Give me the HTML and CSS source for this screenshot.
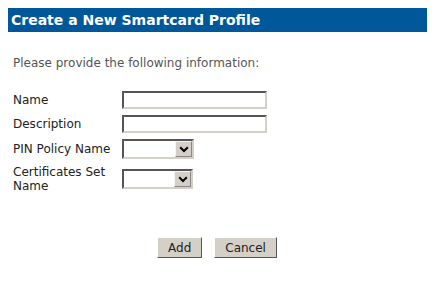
FILE: index.html
```html
<!DOCTYPE html>
<html lang="en">
<head>
  <meta charset="UTF-8" />
  <title>Create a New Smartcard Profile</title>
  <link rel="stylesheet" href="styles.css">
</head>
<body>

  <h1 class="title-bar">Create a New Smartcard Profile</h1>

  <div class="content">
    <p class="intro">Please provide the following information:</p>

    <form id="profileForm" class="profile-form">
      <label for="name">Name</label>
      <input type="text" id="name" class="text-field" />

      <label for="description">Description</label>
      <input type="text" id="description" class="text-field" />

      <label for="pinPolicy">PIN Policy Name</label>
      <div class="select-box wide">
        <span class="select-value"></span>
        <span class="select-arrow">
          <svg width="10" height="7" viewBox="0 0 10 7"><path d="M1.2 1.2 L5 5 L8.8 1.2" fill="none" stroke="#000" stroke-width="2"/></svg>
        </span>
      </div>

      <label for="certSet">Certificates Set Name</label>
      <div class="select-box">
        <span class="select-value"></span>
        <span class="select-arrow">
          <svg width="10" height="7" viewBox="0 0 10 7"><path d="M1.2 1.2 L5 5 L8.8 1.2" fill="none" stroke="#000" stroke-width="2"/></svg>
        </span>
      </div>
    </form>

    <div class="actions">
      <button type="button" class="btn">Add</button>
      <button type="button" class="btn btn-cancel">Cancel</button>
    </div>
  </div>

</body>
</html>
```

FILE: styles.css
```css
body {
  margin: 8px;
  font-family: 'DejaVu Sans', Verdana, sans-serif;
  font-size: 12px;
  color: #222;
  background: #fff;
}
.title-bar {
  margin: 0;
  height: 24px;
  line-height: 24px;
  padding-left: 3px;
  background: #00579a;
  color: #fff;
  font-size: 14px;
  font-weight: bold;
}
.content {
  padding-left: 5px;
}
.intro {
  margin: 23px 0 0;
  color: #555;
  line-height: 16px;
}
.profile-form {
  display: grid;
  grid-template-columns: 109px auto;
  justify-items: start;
  align-items: center;
  row-gap: 6px;
  margin-top: 20px;
}
.profile-form label {
  line-height: 14px;
  width: 100px;
}
.text-field {
  width: 141px;
  height: 14px;
  padding: 0;
  margin: 0;
  border: 2px solid;
  border-color: #555 #d4d0c8 #d4d0c8 #555;
  background: #fff;
  font: inherit;
}
.select-box {
  display: flex;
  width: 67px;
  height: 16px;
  border: 2px solid;
  border-color: #555 #d4d0c8 #d4d0c8 #555;
  background: #fff;
}
.select-box.wide {
  width: 68px;
}
.select-value {
  flex: 1;
}
.select-arrow {
  width: 17px;
  height: 16px;
  background: #d4d0c8;
  border: 1px solid #888;
  border-top-color: #f4f4f4;
  border-left-color: #f4f4f4;
  box-sizing: border-box;
  display: flex;
  align-items: center;
  justify-content: center;
}
.actions {
  display: flex;
  justify-content: center;
  gap: 12px;
  margin-top: 44px;
  padding-right: 6px;
}
.btn {
  font: inherit;
  color: #222;
  background: #d4d0c8;
  height: 21px;
  padding: 0 10px;
  border: 1px solid;
  border-color: #fff #555 #555 #fff;
}
```
